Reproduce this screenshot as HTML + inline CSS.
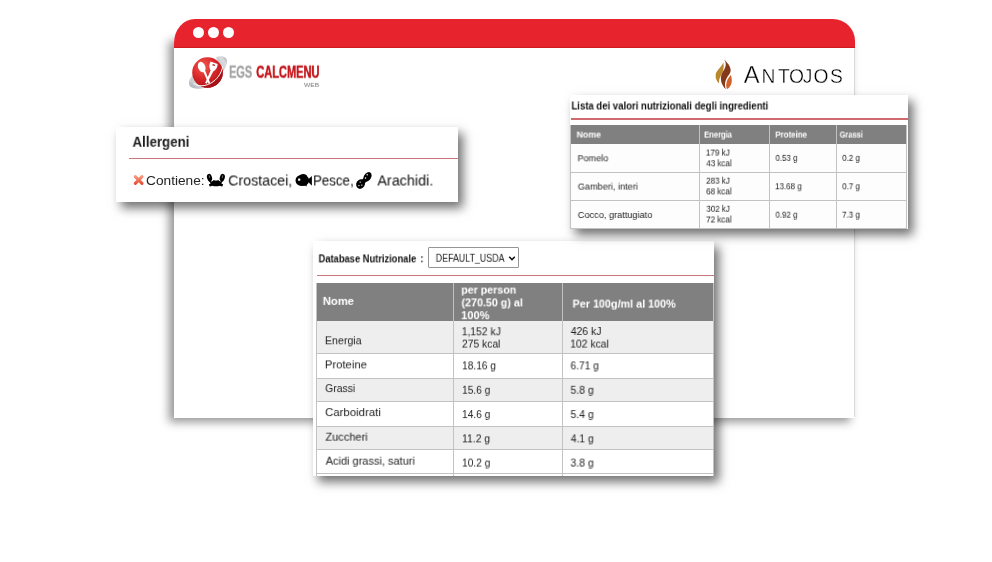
<!DOCTYPE html>
<html lang="it">
<head>
<meta charset="utf-8">
<title>EGS CALCMENU Web - Allergeni e valori nutrizionali</title>
<style>
html,body{margin:0;padding:0;background:#fff;}
body{width:992px;height:562px;position:relative;overflow:hidden;font-family:"Liberation Sans",sans-serif;}
.abs{position:absolute;}
.t{will-change:transform;position:absolute;white-space:pre;line-height:1;transform-origin:0 50%;font-family:"Liberation Sans",sans-serif;}
.win{left:173.5px;top:18.5px;width:681px;height:399px;background:#fff;border-radius:21px 22px 0 0 / 24px 22px 0 0;}
.winsh{left:173.5px;top:37px;width:681px;height:380.5px;box-shadow:-5px 4px 9px rgba(0,0,0,.42);}
.bar{left:0;top:0;width:681px;height:28.6px;border-bottom:1px solid #cf1a23;background:#e7242e;border-radius:21px 22px 0 0 / 24px 22px 0 0;}
.dot{width:11.2px;height:11.2px;border-radius:50%;background:#fff;top:8.4px;}
.redge{left:680px;top:29.6px;width:1px;height:369.4px;background:#d9d9d9;}
.card{background:#fff;box-shadow:5px 6px 10px rgba(0,0,0,.56);}
.hl{background:#c8777a;height:1px;}
.g{background:#808080;}
.ln{background:#c2c2c2;}
.z{background:#eeeeee;}
</style>
</head>
<body>
<!-- browser window -->
<div class="abs winsh"></div>
<div class="abs win">
  <div class="abs bar"></div>
  <div class="abs dot" style="left:19.7px"></div>
  <div class="abs dot" style="left:34.8px"></div>
  <div class="abs dot" style="left:49.8px"></div>
  <div class="abs redge"></div>
</div>
<!-- EGS logo ball -->
<svg class="abs" style="left:184px;top:52px" width="50" height="42" viewBox="184 52 50 42">
  <defs>
    <radialGradient id="rb" cx="0.36" cy="0.3" r="0.75">
      <stop offset="0" stop-color="#f0594c"/><stop offset="0.5" stop-color="#dc2a2c"/><stop offset="1" stop-color="#ab1015"/>
    </radialGradient>
    <linearGradient id="rg" x1="0" y1="1" x2="1" y2="0">
      <stop offset="0" stop-color="#a3a7ab"/><stop offset="0.35" stop-color="#c9ccd0"/><stop offset="0.7" stop-color="#d9dbde"/><stop offset="1" stop-color="#a6aaae"/>
    </linearGradient>
    <clipPath id="cb"><circle cx="207.5" cy="72.5" r="15.3"/></clipPath>
  </defs>
  <path d="M216.2 56.9 C220.6 55.4 226.2 56.4 226.9 60.2 C227.4 63.6 225.6 68 222.4 72.6 L218 66 Z" fill="url(#rg)"/>
  <path d="M192.4 75.6 C188.8 79.6 188 83.8 190 86.2 C192.6 89.2 200.2 89.4 207.4 87.2 L200 78 Z" fill="url(#rg)"/>
  <circle cx="207.5" cy="72.5" r="15.3" fill="url(#rb)"/>
  <g clip-path="url(#cb)">
    <path d="M194.4 83.8 C199 86.6 205 86.2 210.8 83 C216.8 79.6 221.2 73.6 222.6 66.4 L232 66 L232 95 L190 95 Z" fill="#a81217"/>
  </g>
  <path d="M193.6 83.4 C198.8 86.8 205 86.4 210.8 83.2 C216.8 79.8 221.4 73.8 222.8 66" fill="none" stroke="#fff" stroke-width="1"/>
  <g fill="#fff" stroke="none">
    <ellipse cx="201.7" cy="67.1" rx="3.6" ry="5.4" transform="rotate(-20 201.7 67.1)"/>
    <path d="M202.8 70.6 L204.8 69.8 L210.2 83 L208.6 83.7 Z"/>
    <path d="M210.6 61.6 L217.6 64 Q217.8 69 213.2 71.4 L206.8 83.8 L205.2 83 L210.6 70.4 Q208 66.6 210.6 61.6 Z"/>
  </g>
  <ellipse cx="213.7" cy="65" rx="1.4" ry="0.8" fill="#d8262a" transform="rotate(15 213.7 65)"/>
</svg>
<!-- Antojos flame -->
<svg class="abs" style="left:705px;top:52px" width="50" height="42" viewBox="705 52 50 42">
  <path d="M723.3 62.2 C722.4 66.4 716.4 69.6 715.7 74.6 C715.2 78.4 716.8 81.4 719.1 83.6 C718.8 80.6 719.2 78.6 720.6 76.2 C722.6 72.8 724.6 68.2 723.3 62.2 Z" fill="#b9872d"/>
  <path d="M724.3 59.4 C726.6 63.4 726 66.6 723.6 70.6 C721.4 74.2 720.2 77.2 721.2 81.4 C722 84.6 723.8 87.2 725.7 89.2 C724.6 85.6 724.6 82.4 726.4 78.8 C728.2 75.2 731 73.6 730.6 69.6 C730.2 65.2 726.8 62.4 724.3 59.4 Z" fill="#86381a"/>
  <path d="M730.8 75 C728.4 77.4 726.4 80.8 726.2 84.4 C726.1 86.2 726.5 87.8 727.2 89 C729.4 87.8 731.2 85.2 731.7 82.2 C732.1 79.6 731.6 77 730.8 75 Z" fill="#d2632b"/>
</svg>
<!-- Antojos wordmark -->
<svg class="abs" style="left:738px;top:58px;will-change:transform" width="110" height="34" viewBox="738 58 110 34">
  <text font-family="Liberation Sans, sans-serif" fill="#000" stroke="#fff" stroke-width="0.35" y="82.6"><tspan x="743.8" font-size="23.7">A</tspan><tspan font-size="19.3" x="761.4 777.9 789.0 802.8 813.4 830.0">NTOJOS</tspan></text>
</svg>

<!-- allergeni card -->
<div class="abs card" style="left:115.5px;top:126.7px;width:342px;height:75px;"></div>
<div class="abs hl" style="left:129px;top:157.5px;width:328.5px;"></div>
<!-- red cross -->
<svg class="abs" style="left:132px;top:173px" width="14" height="14" viewBox="132 173 14 14">
  <defs><linearGradient id="xg" x1="0" y1="0" x2="0" y2="1"><stop offset="0" stop-color="#f6977c"/><stop offset="1" stop-color="#e8533a"/></linearGradient></defs>
  <path d="M135.3 176.6 L142 183.3 M142 176.6 L135.3 183.3" stroke="url(#xg)" stroke-width="3.1" stroke-linecap="round" fill="none"/>
</svg>
<!-- crab -->
<svg class="abs" style="left:203px;top:170px" width="25" height="20" viewBox="203 170 25 20">
  <g fill="#000">
    <ellipse cx="209.5" cy="177.6" rx="2.5" ry="3.8" transform="rotate(-14 209.5 177.6)"/>
    <ellipse cx="222.3" cy="177.6" rx="2.5" ry="3.8" transform="rotate(14 222.3 177.6)"/>
    <path d="M209.6 180 L212.4 182.4 L211.4 183.8 L208.8 181.2 Z"/>
    <path d="M222.2 180 L219.4 182.4 L220.4 183.8 L223 181.2 Z"/>
    <ellipse cx="216" cy="183.4" rx="5.6" ry="2.9"/>
    <path d="M212.2 181.6 L213.8 179.9 L215.2 181 L216.9 181 L218.2 179.9 L219.8 181.6 Z"/>
    <path d="M208.8 184.2 L212 183.4 L212.8 185.8 L209.8 186.6 Z"/>
    <path d="M223.2 184.2 L220 183.4 L219.2 185.8 L222.2 186.6 Z"/>
  </g>
  <path d="M209.2 175.4 L209.5 177.8" stroke="#ccc" stroke-width="0.55" fill="none"/>
  <path d="M222.6 175.4 L222.3 177.8" stroke="#ccc" stroke-width="0.55" fill="none"/>
</svg>
<!-- fish -->
<svg class="abs" style="left:292px;top:170px" width="25" height="20" viewBox="292 170 25 20">
  <g fill="#000">
    <ellipse cx="302.3" cy="180.4" rx="6.8" ry="5.7"/>
    <path d="M299 176 Q302.4 172.4 307 175.4 L305.6 178.4 Z"/>
    <path d="M303.6 184.6 L306.6 186.6 L306.8 184 Z"/>
    <path d="M307 180.4 L311.9 175.9 L311.9 185.8 Z"/>
  </g>
  <rect x="298.1" y="178.5" width="2.2" height="2.3" rx="0.5" fill="#fff"/>
</svg>
<!-- peanut -->
<svg class="abs" style="left:352px;top:168px" width="25" height="24" viewBox="352 168 25 24">
  <g fill="#000">
    <ellipse cx="360.6" cy="183.9" rx="4.3" ry="4.9" transform="rotate(30 360.6 183.9)"/>
    <ellipse cx="367.5" cy="176.9" rx="3.6" ry="5.2" transform="rotate(32 367.5 176.9)"/>
    <path d="M361.6 180 L364.4 177.6 L366.6 181.4 L363.8 184 Z"/>
  </g>
  <g fill="#fff">
    <circle cx="367.2" cy="174.8" r="0.75"/><circle cx="365.5" cy="178" r="0.75"/>
    <circle cx="360.2" cy="182.1" r="0.7"/><circle cx="358.9" cy="185.6" r="0.7"/><circle cx="361.8" cy="185.1" r="0.7"/>
  </g>
</svg>

<!-- bottom card -->
<div class="abs card" style="left:312.5px;top:240.5px;width:401.5px;height:235.5px;"></div>
<div class="abs hl" style="left:316.5px;top:275.2px;width:397.5px;"></div>
<div class="abs" style="left:428.2px;top:247.2px;width:88.6px;height:18.6px;border:1px solid #959595;border-radius:1px;background:#fff;"></div>
<svg class="abs" style="left:508.4px;top:255.1px" width="8" height="7" viewBox="0 0 8 7"><path d="M1.2 1.8 L4 4.6 L6.8 1.8" fill="none" stroke="#111" stroke-width="1.5"/></svg>
<div class="abs g" style="left:316.7px;top:282.5px;width:396.6px;height:38.2px;"></div>
<div class="abs z" style="left:316.7px;top:320.7px;width:396.6px;height:32.9px;"></div>
<div class="abs z" style="left:316.7px;top:378px;width:396.6px;height:23.4px;"></div>
<div class="abs z" style="left:316.7px;top:426.2px;width:396.6px;height:23.3px;"></div>
<div class="abs ln" style="left:316.7px;top:353.2px;width:396.6px;height:1px;"></div>
<div class="abs ln" style="left:316.7px;top:377.6px;width:396.6px;height:1px;"></div>
<div class="abs ln" style="left:316.7px;top:401px;width:396.6px;height:1px;"></div>
<div class="abs ln" style="left:316.7px;top:425.8px;width:396.6px;height:1px;"></div>
<div class="abs ln" style="left:316.7px;top:449.1px;width:396.6px;height:1px;"></div>
<div class="abs ln" style="left:316.7px;top:473.4px;width:396.6px;height:1px;"></div>
<div class="abs ln" style="left:316.3px;top:282.5px;width:1px;height:193px;"></div>
<div class="abs ln" style="left:453.1px;top:282.5px;width:1px;height:193px;"></div>
<div class="abs ln" style="left:562px;top:282.5px;width:1px;height:193px;"></div>
<div class="abs ln" style="left:712.8px;top:282.5px;width:1px;height:193px;"></div>
<!-- right card -->
<div class="abs card" style="left:569.5px;top:94.5px;width:338px;height:134.5px;"></div>
<div class="abs hl" style="left:570.5px;top:118.2px;width:337px;height:1.7px;background:#cf6b6f;"></div>
<div class="abs g" style="left:570.7px;top:125px;width:336px;height:19px;"></div>
<div class="abs" style="left:570.7px;top:144px;width:336px;height:84.4px;background:#fdfdfd;"></div>
<!-- right table lines -->
<div class="abs ln" style="left:570.7px;top:172px;width:336px;height:1px;"></div>
<div class="abs ln" style="left:570.7px;top:200px;width:336px;height:1px;"></div>
<div class="abs ln" style="left:570.7px;top:228px;width:336px;height:1px;"></div>
<div class="abs ln" style="left:570.4px;top:125px;width:1px;height:104px;"></div>
<div class="abs ln" style="left:699.2px;top:125px;width:1px;height:104px;"></div>
<div class="abs ln" style="left:769.2px;top:125px;width:1px;height:104px;"></div>
<div class="abs ln" style="left:835.8px;top:125px;width:1px;height:104px;"></div>
<div class="abs ln" style="left:906.2px;top:125px;width:1px;height:104px;"></div>
<span class="t" style="left:229px;top:63px;font-size:16.2px;color:#a3a3a3;font-weight:700;transform:translate(0.03px,0.70px) rotate(.005deg) scaleX(0.675);-webkit-text-stroke:0.35px #a3a3a3;">EGS</span>
<span class="t" style="left:256px;top:63px;font-size:16.2px;color:#c4161c;font-weight:700;transform:translate(0.26px,0.70px) rotate(.005deg) scaleX(0.682);-webkit-text-stroke:0.5px #c4161c;">CALCMENU</span>
<span class="t" style="left:304px;top:82px;font-size:5px;color:#777;transform:translate(0.00px,0.90px) rotate(.005deg) scaleX(1.333);">WEB</span>
<span class="t" style="left:132px;top:134px;font-size:14px;color:#1c1c1c;font-weight:700;transform:translate(0.53px,0.80px) rotate(.005deg) scaleX(0.949);">Allergeni</span>
<span class="t" style="left:145px;top:175px;font-size:12.6px;color:#222;transform:translate(0.98px,0.00px) rotate(.005deg) scaleX(1.088);">Contiene:</span>
<span class="t" style="left:228px;top:173px;font-size:14px;color:#111;transform:translate(0.24px,0.50px) rotate(.005deg) scaleX(1.016);">Crostacei,</span>
<span class="t" style="left:313px;top:173px;font-size:14px;color:#111;transform:translate(0.01px,0.50px) rotate(.005deg) scaleX(0.952);">Pesce,</span>
<span class="t" style="left:377px;top:173px;font-size:14px;color:#111;transform:translate(0.40px,0.50px) rotate(.005deg) scaleX(1.027);">Arachidi.</span>
<span class="t" style="left:571px;top:101px;font-size:10px;color:#111;font-weight:700;transform:translate(0.48px,0.50px) rotate(.005deg) scaleX(0.955);">Lista dei valori nutrizionali degli ingredienti</span>
<span class="t" style="left:576px;top:130px;font-size:8.8px;color:#fff;font-weight:700;transform:translate(0.60px,0.60px) rotate(.005deg) scaleX(0.998);">Nome</span>
<span class="t" style="left:704px;top:130px;font-size:8.8px;color:#fff;font-weight:700;transform:translate(0.17px,0.60px) rotate(.005deg) scaleX(0.860);">Energia</span>
<span class="t" style="left:775px;top:130px;font-size:8.8px;color:#fff;font-weight:700;transform:translate(0.35px,0.60px) rotate(.005deg) scaleX(0.899);">Proteine</span>
<span class="t" style="left:839px;top:130px;font-size:8.8px;color:#fff;font-weight:700;transform:translate(0.69px,0.60px) rotate(.005deg) scaleX(0.842);">Grassi</span>
<span class="t" style="left:577px;top:154px;font-size:8.7px;color:#222;transform:translate(0.52px,0.30px) rotate(.005deg) scaleX(1.044);">Pomelo</span>
<span class="t" style="left:577px;top:182px;font-size:8.7px;color:#222;transform:translate(0.77px,0.60px) rotate(.005deg) scaleX(1.054);">Gamberi, interi</span>
<span class="t" style="left:577px;top:211px;font-size:8.7px;color:#222;transform:translate(0.77px,0.00px) rotate(.005deg) scaleX(1.057);">Cocco, grattugiato</span>
<span class="t" style="left:705px;top:148px;font-size:8.5px;color:#1a1a1a;transform:translate(0.88px,0.60px) rotate(.005deg) scaleX(0.956);">179 kJ</span>
<span class="t" style="left:706px;top:159px;font-size:8.5px;color:#1a1a1a;transform:translate(0.36px,0.30px) rotate(.005deg) scaleX(0.941);">43 kcal</span>
<span class="t" style="left:706px;top:176px;font-size:8.5px;color:#1a1a1a;transform:translate(0.13px,0.70px) rotate(.005deg) scaleX(0.946);">283 kJ</span>
<span class="t" style="left:706px;top:187px;font-size:8.5px;color:#1a1a1a;transform:translate(0.12px,0.40px) rotate(.005deg) scaleX(0.950);">68 kcal</span>
<span class="t" style="left:706px;top:204px;font-size:8.5px;color:#1a1a1a;transform:translate(0.37px,0.80px) rotate(.005deg) scaleX(0.936);">302 kJ</span>
<span class="t" style="left:706px;top:215px;font-size:8.5px;color:#1a1a1a;transform:translate(0.12px,0.50px) rotate(.005deg) scaleX(0.950);">72 kcal</span>
<span class="t" style="left:775px;top:153px;font-size:8.5px;color:#1a1a1a;transform:translate(0.57px,0.90px) rotate(.005deg) scaleX(0.923);">0.53 g</span>
<span class="t" style="left:842px;top:153px;font-size:8.5px;color:#1a1a1a;transform:translate(0.27px,0.90px) rotate(.005deg) scaleX(0.932);">0.2 g</span>
<span class="t" style="left:775px;top:182px;font-size:8.5px;color:#1a1a1a;transform:translate(0.10px,0.30px) rotate(.005deg) scaleX(0.937);">13.68 g</span>
<span class="t" style="left:842px;top:182px;font-size:8.5px;color:#1a1a1a;transform:translate(0.27px,0.30px) rotate(.005deg) scaleX(0.932);">0.7 g</span>
<span class="t" style="left:775px;top:210px;font-size:8.5px;color:#1a1a1a;transform:translate(0.57px,0.70px) rotate(.005deg) scaleX(0.923);">0.92 g</span>
<span class="t" style="left:842px;top:210px;font-size:8.5px;color:#1a1a1a;transform:translate(0.03px,0.70px) rotate(.005deg) scaleX(0.944);">7.3 g</span>
<span class="t" style="left:318px;top:254px;font-size:10px;color:#111;font-weight:700;transform:translate(0.60px,0.40px) rotate(.005deg) scaleX(0.934);">Database Nutrizionale</span>
<span class="t" style="left:420px;top:254px;font-size:10px;color:#222;font-weight:700;transform:translate(0.20px,0.30px) rotate(.005deg) scaleX(1.000);">:</span>
<span class="t" style="left:435px;top:253px;font-size:10px;color:#222;transform:translate(0.74px,0.80px) rotate(.005deg) scaleX(0.886);">DEFAULT_USDA</span>
<span class="t" style="left:322px;top:295px;font-size:11.2px;color:#fff;font-weight:700;transform:translate(0.85px,0.90px) rotate(.005deg) scaleX(1.000);">Nome</span>
<span class="t" style="left:461px;top:284px;font-size:11.2px;color:#fff;font-weight:700;transform:translate(0.29px,0.60px) rotate(.005deg) scaleX(0.950);">per person</span>
<span class="t" style="left:461px;top:297px;font-size:11.2px;color:#fff;font-weight:700;transform:translate(0.52px,0.40px) rotate(.005deg) scaleX(0.956);">(270.50 g) al</span>
<span class="t" style="left:461px;top:310px;font-size:11.2px;color:#fff;font-weight:700;transform:translate(0.26px,0.20px) rotate(.005deg) scaleX(0.980);">100%</span>
<span class="t" style="left:572px;top:298px;font-size:11.2px;color:#fff;font-weight:700;transform:translate(0.58px,0.60px) rotate(.005deg) scaleX(0.964);">Per 100g/ml al 100%</span>
<span class="t" style="left:324px;top:335px;font-size:10.5px;color:#222;transform:translate(0.94px,0.30px) rotate(.005deg) scaleX(1.011);">Energia</span>
<span class="t" style="left:324px;top:359px;font-size:10.5px;color:#222;transform:translate(0.90px,0.40px) rotate(.005deg) scaleX(1.071);">Proteine</span>
<span class="t" style="left:325px;top:383px;font-size:10.5px;color:#222;transform:translate(0.21px,0.10px) rotate(.005deg) scaleX(0.985);">Grassi</span>
<span class="t" style="left:325px;top:407px;font-size:10.5px;color:#222;transform:translate(0.16px,0.10px) rotate(.005deg) scaleX(1.085);">Carboidrati</span>
<span class="t" style="left:325px;top:431px;font-size:10.5px;color:#222;transform:translate(0.44px,0.70px) rotate(.005deg) scaleX(1.050);">Zuccheri</span>
<span class="t" style="left:325px;top:455px;font-size:10.5px;color:#222;transform:translate(0.70px,0.70px) rotate(.005deg) scaleX(1.046);">Acidi grassi, saturi</span>
<span class="t" style="left:461px;top:327px;font-size:10.2px;color:#222;transform:translate(0.74px,0.30px) rotate(.005deg) scaleX(1.014);">1,152 kJ</span>
<span class="t" style="left:461px;top:339px;font-size:10.2px;color:#222;transform:translate(0.99px,0.60px) rotate(.005deg) scaleX(1.012);">275 kcal</span>
<span class="t" style="left:570px;top:327px;font-size:10.2px;color:#222;transform:translate(0.74px,0.00px) rotate(.005deg) scaleX(1.024);">426 kJ</span>
<span class="t" style="left:570px;top:339px;font-size:10.2px;color:#222;transform:translate(0.24px,0.60px) rotate(.005deg) scaleX(1.019);">102 kcal</span>
<span class="t" style="left:462px;top:361px;font-size:10.2px;color:#222;transform:translate(0.05px,0.40px) rotate(.005deg) scaleX(1.000);">18.16 g</span>
<span class="t" style="left:570px;top:361px;font-size:10.2px;color:#222;transform:translate(0.50px,0.40px) rotate(.005deg) scaleX(0.998);">6.71 g</span>
<span class="t" style="left:462px;top:385px;font-size:10.2px;color:#222;transform:translate(0.06px,0.80px) rotate(.005deg) scaleX(0.993);">15.6 g</span>
<span class="t" style="left:570px;top:385px;font-size:10.2px;color:#222;transform:translate(0.49px,0.80px) rotate(.005deg) scaleX(1.023);">5.8 g</span>
<span class="t" style="left:462px;top:410px;font-size:10.2px;color:#222;transform:translate(0.06px,0.10px) rotate(.005deg) scaleX(0.993);">14.6 g</span>
<span class="t" style="left:570px;top:410px;font-size:10.2px;color:#222;transform:translate(0.49px,0.10px) rotate(.005deg) scaleX(1.023);">5.4 g</span>
<span class="t" style="left:462px;top:434px;font-size:10.2px;color:#222;transform:translate(0.03px,0.40px) rotate(.005deg) scaleX(1.021);">11.2 g</span>
<span class="t" style="left:570px;top:434px;font-size:10.2px;color:#222;transform:translate(0.75px,0.40px) rotate(.005deg) scaleX(1.011);">4.1 g</span>
<span class="t" style="left:462px;top:458px;font-size:10.2px;color:#222;transform:translate(0.06px,0.60px) rotate(.005deg) scaleX(0.993);">10.2 g</span>
<span class="t" style="left:570px;top:458px;font-size:10.2px;color:#222;transform:translate(0.49px,0.60px) rotate(.005deg) scaleX(1.023);">3.8 g</span>
</body>
</html>
